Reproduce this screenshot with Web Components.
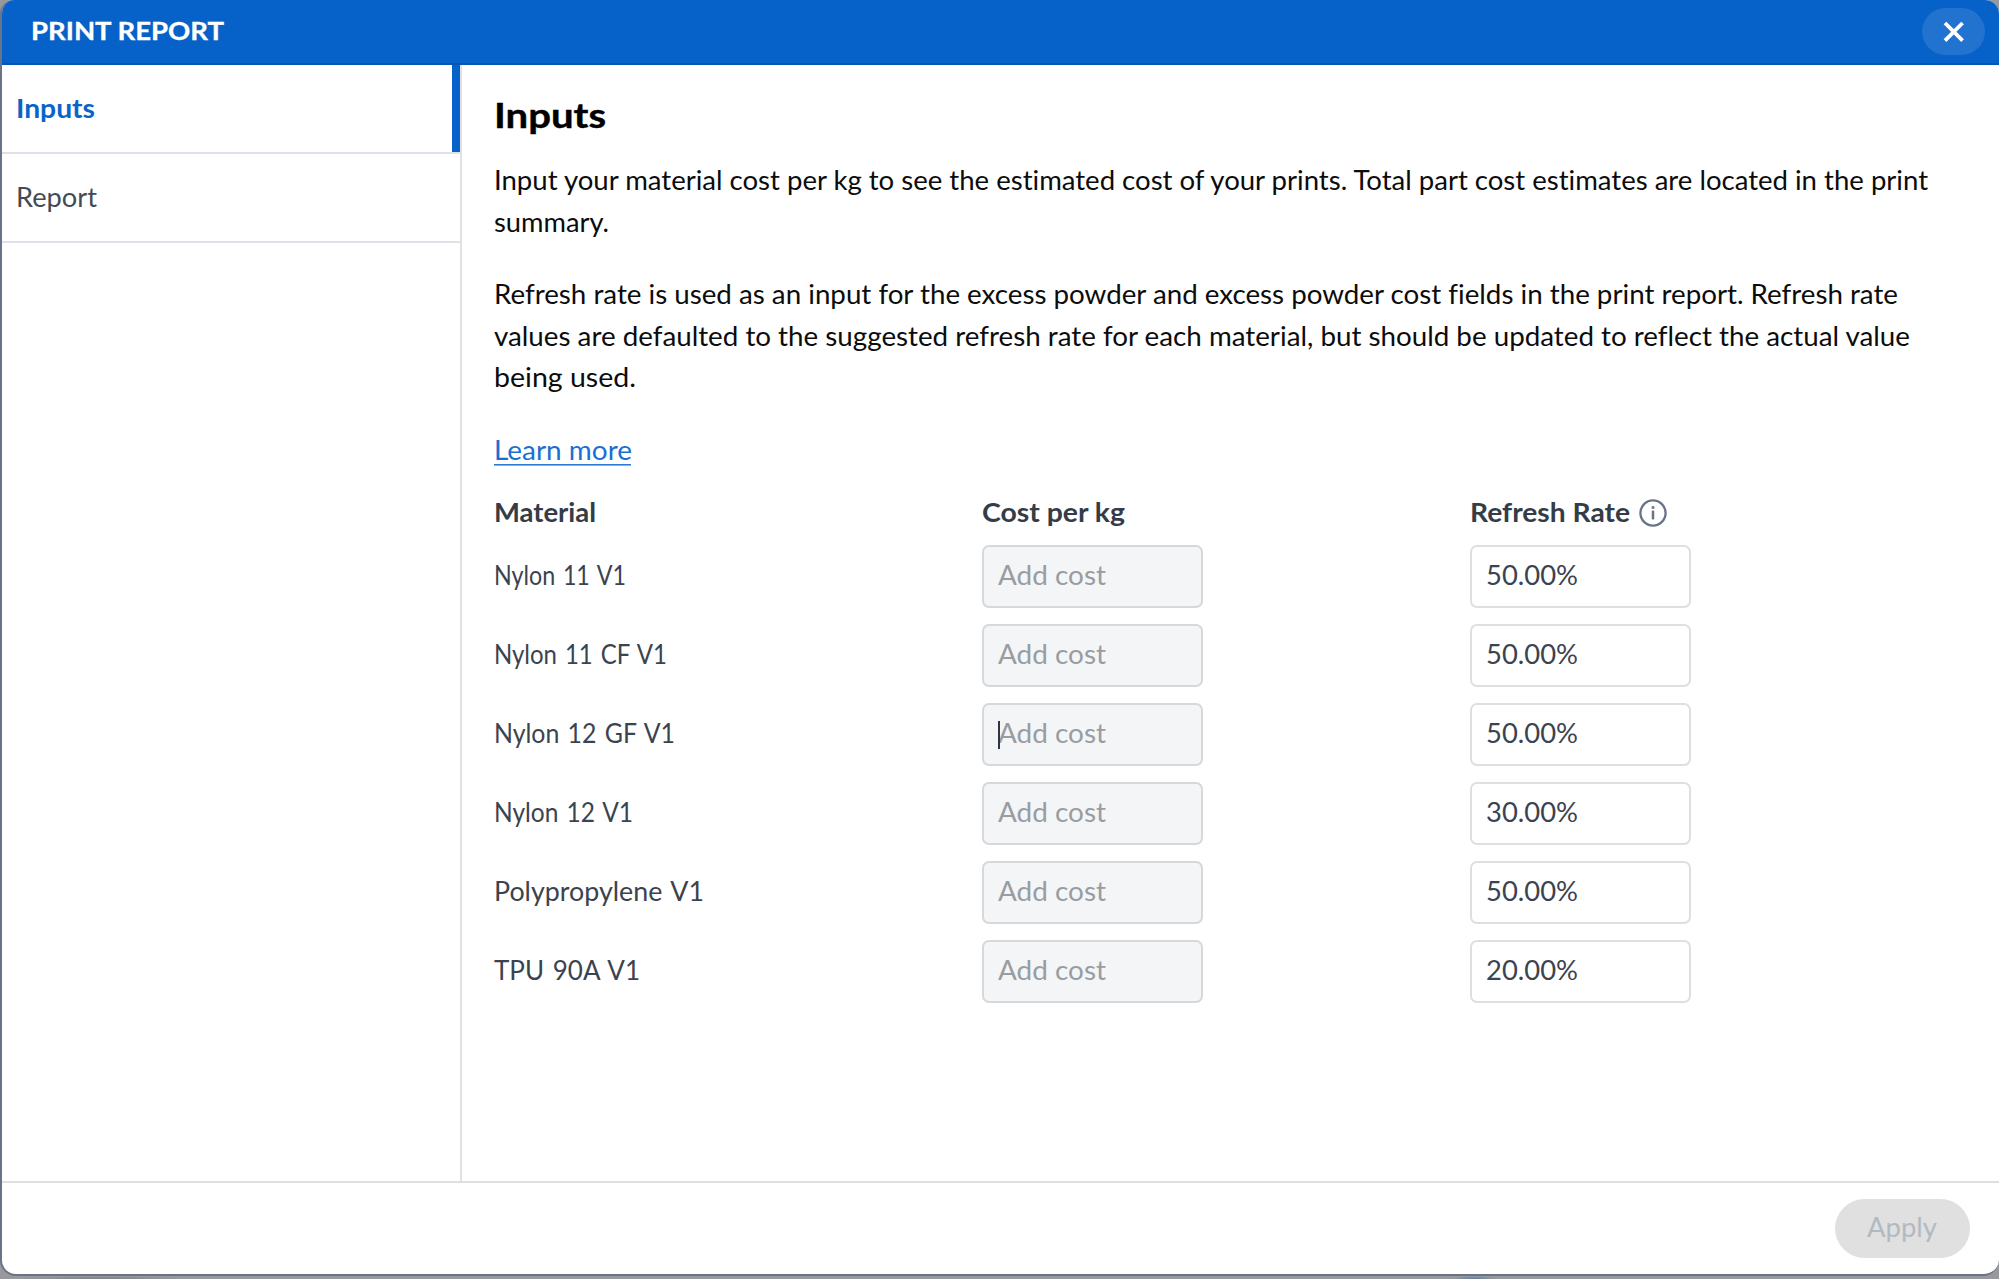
<!DOCTYPE html>
<html lang="en">
<head>
<meta charset="utf-8">
<title>Print Report</title>
<style>
html,body{margin:0;height:100%;overflow:hidden}
body{font-family:Lato,"Open Sans",sans-serif;font-size:26px;background:#98999c;font-variant-ligatures:none}
</style>
</head>
<body>
<print-dialog></print-dialog>
<script>
const define = (name, html, setup) => customElements.define(name, class extends HTMLElement {
  connectedCallback() {
    if (this.shadowRoot) return;
    const t = document.createElement('template');
    t.innerHTML = html;
    this.attachShadow({mode: 'open'}).appendChild(t.content.cloneNode(true));
    if (setup) setup(this, this.shadowRoot);
  }
});

/* One line of text stretched to an exact advance width (attribute "w"). */
define('fit-text', `<style>:host{display:block;white-space:nowrap}span{display:inline-block;vertical-align:top;transform-origin:0 0}</style><span><slot></slot></span>`,
  (el, root) => {
    const s = root.querySelector('span'), w = +el.getAttribute('w');
    el.style.width = w + 'px';
    s.style.transform = `scaleX(${(w / s.getBoundingClientRect().width).toFixed(5)})`;
  });

define('close-button', `<style>
:host{display:flex;align-items:center;justify-content:center;width:63px;height:47px;border-radius:23.5px;background:#2173cf}
svg{display:block}</style>
<svg width="22" height="22" viewBox="0 0 22 22" fill="none" stroke="#fff" stroke-width="3.8"><path d="M2 2 19.6 19.6M19.6 2 2 19.6"/></svg>`);

define('dialog-header', `<style>
:host{display:flex;justify-content:space-between;align-items:flex-start;box-sizing:border-box;height:65px;padding:8px 14px 0 29px;background:#0662c8;border-bottom:2px solid #0457b5;color:#fff}
.t{font-weight:700;font-size:25px;line-height:44px;-webkit-text-stroke:.3px}</style>
<div class="t"><slot></slot></div><close-button></close-button>`);

define('nav-item', `<style>
:host{display:block;box-sizing:border-box;height:89px;padding:0 0 0 13.5px;border-bottom:2px solid #dde2ea;color:#434b54;line-height:86px}
:host([active]){color:#0a63ca;font-weight:700;background:linear-gradient(#0662c8,#0662c8) right/8px 100% no-repeat}
</style><slot></slot>`);

define('cell-field', `<style>
:host{display:block;position:relative;box-sizing:border-box;width:221px;height:63px;border:2px solid #dfdfdf;border-radius:7px;padding-left:13.5px;line-height:57px;color:#3b4350;background:#fff}
:host([empty]){background:#f4f5f7;border-color:#d6d8da;color:#999da1}
i{display:none;position:absolute;left:14px;top:16px;width:2px;height:28px;background:#303640}
:host([focused]) i{display:block}
</style><slot></slot><i></i>`);

define('info-icon', `<style>:host{display:block;width:28px;height:28px}svg{display:block}</style>
<svg width="28" height="28" viewBox="0 0 28 28"><circle cx="14" cy="14" r="12.6" fill="none" stroke="#697387" stroke-width="2.3"/><path d="M14 11.6V20.4" stroke="#697387" stroke-width="2.5"/><path d="M14 7.2V9.8" stroke="#697387" stroke-width="2.7"/></svg>`);

define('material-table', `<style>
:host{display:block;color:#3b434e}
.head,.row{display:grid;grid-template-columns:488px 488px 1fr}
.head{font-weight:700;line-height:32px;margin-bottom:16.6px;color:#343c47}
.rr{display:flex;gap:9px;align-items:center}
info-icon{margin-top:2px}
.rows{display:flex;flex-direction:column;gap:16px}
.name{line-height:61px;word-spacing:2px}
</style>
<div class="head"><fit-text w="102">Material</fit-text><fit-text w="143">Cost per kg</fit-text><div class="rr"><fit-text w="160">Refresh Rate</fit-text><info-icon></info-icon></div></div>
<div class="rows"></div>`, (el, root) => {
  const data = [['Nylon 11 V1',132,'50.00%'],['Nylon 11 CF V1',173,'50.00%'],['Nylon 12 GF V1',181,'50.00%',1],['Nylon 12 V1',139,'30.00%'],['Polypropylene V1',210,'50.00%'],['TPU 90A V1',146,'20.00%']];
  root.querySelector('.rows').innerHTML = data.map(([n, w, r, f]) =>
    `<div class="row"><div class="name"><fit-text w="${w}">${n}</fit-text></div><cell-field empty${f ? ' focused' : ''}><fit-text w="108">Add cost</fit-text></cell-field><cell-field><fit-text w="92">${r}</fit-text></cell-field></div>`).join('');
});

define('inputs-panel', `<style>
:host{display:block;padding:28px 0 0 32px;color:#0c0c0c}
h1{margin:0 0 25px;font-size:35px;line-height:42px;font-weight:700;color:#000;-webkit-text-stroke:.4px}
p{margin:0 0 31.2px;line-height:41.5px}
.more{display:block;width:137px;line-height:41.5px;margin-bottom:25px;color:#1a70d2;background:linear-gradient(#2b7bd6,#2b7bd6) 0 34px/100% 1.6px no-repeat}
</style>
<h1><fit-text w="112">Inputs</fit-text></h1>
<p><fit-text w="1434">Input your material cost per kg to see the estimated cost of your prints. Total part cost estimates are located in the print</fit-text><fit-text w="115">summary.</fit-text></p>
<p><fit-text w="1404">Refresh rate is used as an input for the excess powder and excess powder cost fields in the print report. Refresh rate</fit-text><fit-text w="1416">values are defaulted to the suggested refresh rate for each material, but should be updated to reflect the actual value</fit-text><fit-text w="142">being used.</fit-text></p>
<a class="more"><fit-text w="138">Learn more</fit-text></a>
<material-table></material-table>`);

define('apply-button', `<style>
:host{display:block;box-sizing:border-box;width:135px;height:59px;border-radius:29.5px;background:#e0e0e0;color:#b2bac1;padding-left:32px;line-height:56px}
</style><fit-text w="70">Apply</fit-text>`);

define('print-dialog', `<style>
:host{display:flex;flex-direction:column;box-sizing:border-box;height:1279px;padding-bottom:3px;
 background:radial-gradient(ellipse 22px 3px at 1474px 100%,#5f7d9f,transparent),radial-gradient(ellipse 80px 3px at 100px 100%,#7c7e83,transparent),#98999c}
.box{flex:1;display:flex;flex-direction:column;box-sizing:border-box;border:solid #6a7488;border-width:0 0 2px 2px;border-radius:14px 14px 16px 16px;overflow:hidden;background:#fff}
.main{flex:1;display:flex}
nav{width:458px;border-right:2px solid #e0e0e0}
inputs-panel{flex:1}
footer{box-sizing:border-box;height:93px;border-top:2px solid #dedfe0;display:flex;justify-content:flex-end;padding:16px 29px 0 0}
</style>
<div class="box">
<dialog-header><fit-text w="193">PRINT REPORT</fit-text></dialog-header>
<div class="main">
<nav><nav-item active><fit-text w="79">Inputs</fit-text></nav-item><nav-item><fit-text w="81">Report</fit-text></nav-item></nav>
<inputs-panel></inputs-panel>
</div>
<footer><apply-button></apply-button></footer>
</div>`);
</script>
</body>
</html>
